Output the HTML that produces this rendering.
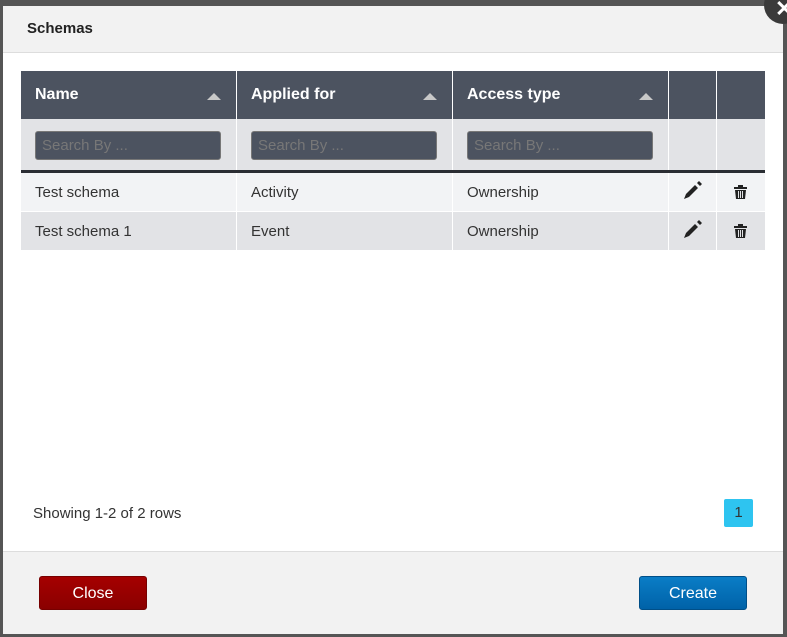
<!DOCTYPE html>
<html><head><style>
*{margin:0;padding:0;box-sizing:border-box}
body{width:787px;height:637px;background:#555;position:relative;overflow:hidden;font-family:"Liberation Sans",sans-serif;}
.dlg{position:absolute;left:3px;top:6px;width:780px;height:628px;background:#fff}
.hd{position:absolute;left:0;top:0;width:780px;height:47px;background:#f2f2f2;border-bottom:1px solid #ddd;font-size:15px;font-weight:bold;color:#222;padding:14px 0 0 24px}
.x{position:absolute;left:764px;top:-14px;width:38px;height:38px;border-radius:50%;background:#3a3a3a;color:#fff;font-size:22px;font-weight:bold;padding:10px 0 0 11px}
.c{position:absolute;font-size:15px;color:#333}
.th{position:absolute;top:71px;height:48px;background:#4c5360;color:#fff;font-size:16px;font-weight:bold;padding:15px 0 0 14px}
.tri{position:absolute;top:22px;width:0;height:0;border-left:7px solid transparent;border-right:7px solid transparent;border-bottom:7px solid #c8c8c8}
.fr{position:absolute;top:119px;height:51px;background:#e2e3e6}
.in{position:absolute;top:12px;left:14px;width:186px;height:29px;background:#4c5360;border:1px solid #777;border-radius:3px;color:#777;font-size:15px;padding:5px 6px}
.r{position:absolute;height:38px;font-size:15px;color:#333;padding:11px 0 0 14px}
.btn{position:absolute;top:576px;width:108px;height:34px;border-radius:3px;color:#fff;font-size:16px;text-align:center;padding-top:8px}
</style></head><body>
<div class="dlg">
<div class="hd">Schemas</div>
<div style="position:absolute;left:0;top:545px;width:780px;height:83px;background:#f2f2f2;border-top:1px solid #ddd"></div>
</div>
<div class="x">✕</div>
<div class="th" style="left:21px;width:215px">Name<div class="tri" style="left:186px"></div></div>
<div class="th" style="left:237px;width:215px">Applied for<div class="tri" style="left:186px"></div></div>
<div class="th" style="left:453px;width:215px">Access type<div class="tri" style="left:186px"></div></div>
<div class="th" style="left:669px;width:47px"></div>
<div class="th" style="left:717px;width:48px"></div>
<div class="fr" style="left:21px;width:215px"><div class="in">Search By ...</div></div>
<div class="fr" style="left:237px;width:215px"><div class="in">Search By ...</div></div>
<div class="fr" style="left:453px;width:215px"><div class="in">Search By ...</div></div>
<div class="fr" style="left:669px;width:47px"></div>
<div class="fr" style="left:717px;width:48px"></div>
<div style="position:absolute;left:21px;top:170px;width:744px;height:3px;background:#2a2d33"></div>
<div class="r" style="left:21px;top:173px;width:215px;background:#f2f3f5">Test schema</div>
<div class="r" style="left:237px;top:173px;width:215px;background:#f2f3f5">Activity</div>
<div class="r" style="left:453px;top:173px;width:215px;background:#f2f3f5">Ownership</div>
<div class="r" style="left:669px;top:173px;width:47px;background:#f2f3f5"></div>
<div class="r" style="left:717px;top:173px;width:48px;background:#f2f3f5"></div>
<div class="r" style="left:21px;top:212px;width:215px;background:#e2e3e6">Test schema 1</div>
<div class="r" style="left:237px;top:212px;width:215px;background:#e2e3e6">Event</div>
<div class="r" style="left:453px;top:212px;width:215px;background:#e2e3e6">Ownership</div>
<div class="r" style="left:669px;top:212px;width:47px;background:#e2e3e6"></div>
<div class="r" style="left:717px;top:212px;width:48px;background:#e2e3e6"></div>
<svg style="position:absolute;left:0;top:0" width="787" height="637">
<g fill="#222">
<path d="M684 199 l2-5 9-9 3 3-9 9z M697 183 l2-2 3 3-2 2z"/>
<path d="M684 238 l2-5 9-9 3 3-9 9z M697 222 l2-2 3 3-2 2z"/>
<path d="M734 187h13v2h-13z M738 185h5v2h-5z M735 190h11l-1 9h-9z"/>
<path d="M734 226h13v2h-13z M738 224h5v2h-5z M735 229h11l-1 9h-9z"/>
</g>
<g stroke="#e2e3e6" stroke-width="1"><path d="M738.5 191v7M740.5 191v7M742.5 191v7M738.5 230v7M740.5 230v7M742.5 230v7"/></g>
</svg>
<div class="c" style="left:33px;top:505px">Showing 1-2 of 2 rows</div>
<div style="position:absolute;left:724px;top:499px;width:29px;height:28px;background:#2ec4f0;border-radius:2px;color:#333;font-size:15px;text-align:center;padding-top:5px">1</div>
<div class="btn" style="left:39px;background:linear-gradient(#a50000,#8a0000);border:1px solid #700">Close</div>
<div class="btn" style="left:639px;background:linear-gradient(#0a7dc6,#0062a8);border:1px solid #004f88">Create</div>
</body></html>
